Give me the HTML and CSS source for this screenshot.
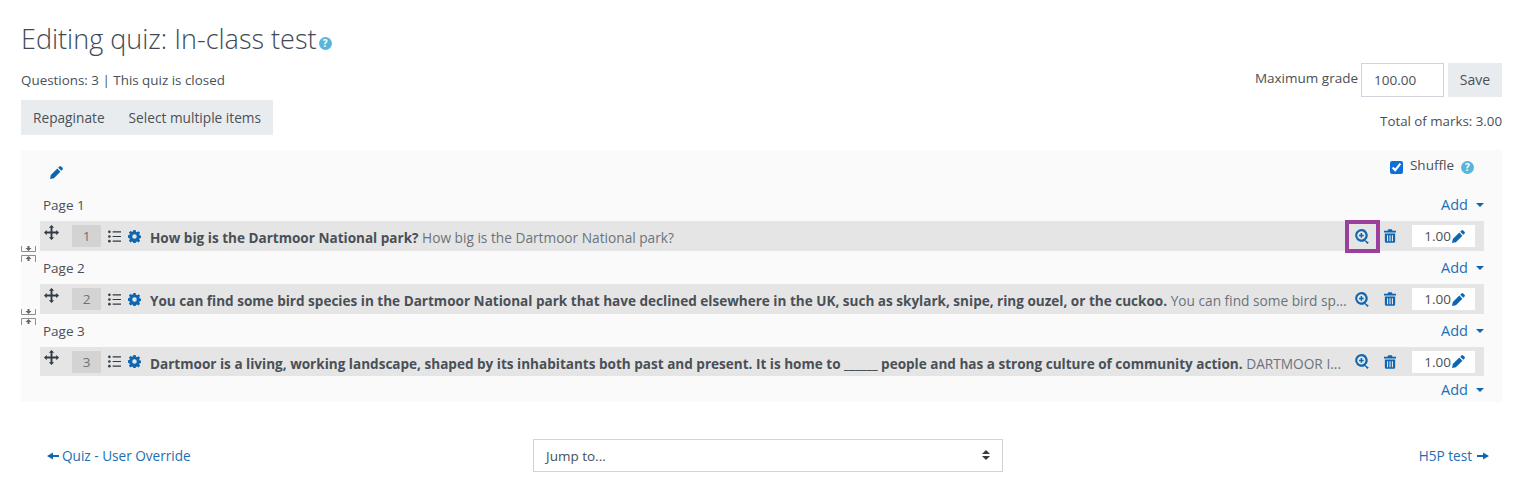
FILE: index.html
```html
<!DOCTYPE html>
<html lang="en">
<head>
    <meta charset="UTF-8">
    <meta name="viewport" content="width=device-width, initial-scale=1.0">
    <title>Editing quiz: In-class test</title>
    <link rel="stylesheet" href="styles.css">
</head>
<body>
    <svg class="sprites" width="0" height="0">
        <symbol id="i-move" viewBox="0 0 16 16"><path d="M8 0l2.800 2.900H9v4.100h4.100V5.200L16 8l-2.900 2.800V9H9v4.100h1.800L8 16l-2.800-2.900H7V9H2.900v1.800L0 8l2.900-2.800V7H7V2.900H5.200z"/></symbol>
        <symbol id="i-list" viewBox="0 0 14 14"><circle cx="1.500" cy="2" r="1.400"/><circle cx="1.500" cy="7" r="1.400"/><circle cx="1.500" cy="12" r="1.400"/><path d="M5 1.400h9v1.200H5zM5 6.400h9v1.200H5zM5 11.400h9v1.200H5z"/></symbol>
        <symbol id="i-cog" viewBox="0 0 16 16"><path fill-rule="evenodd" d="M6.600 0h2.800l.4 2.100 1.300.6 1.800-1.200 2 2-1.200 1.800.6 1.300 2.100.4v2.800l-2.100.4-.6 1.300 1.200 1.800-2 2-1.800-1.200-1.300.6-.4 2.100H6.600l-.4-2.100-1.300-.6-1.800 1.200-2-2 1.200-1.800-.6-1.300L-.4 9.400V6.600l2.100-.4.6-1.300L1.100 3.100l2-2 1.800 1.200 1.300-.6zM8 5.200a2.800 2.800 0 100 5.600 2.800 2.800 0 000-5.600z"/></symbol>
        <symbol id="i-zoom" viewBox="0 0 16 16"><path fill-rule="evenodd" d="M6.800 0a6.800 6.800 0 014.300 12l3.600 2.500-1.500 1.500-2.800-3.300A6.800 6.800 0 116.800 0zm0 2.400a4.400 4.400 0 100 8.800 4.400 4.400 0 000-8.800z"/><path d="M6 4.300h1.600V6H9.300v1.600H7.600v1.700H6V7.600H4.300V6H6z"/></symbol>
        <symbol id="i-trash" viewBox="0 0 14 16"><path fill-rule="evenodd" d="M5 0h4l1 2h4v2H0V2h4zM1 5h12v9.500a1.500 1.500 0 01-1.500 1.500h-9A1.500 1.500 0 011 14.500zm2.500 2v7h1.300V7zm2.900 0v7h1.300V7zm2.800 0v7h1.300V7z"/></symbol>
        <symbol id="i-pencil" viewBox="0 0 16 16"><path d="M11.600.6a1.500 1.500 0 012.100 0l1.700 1.700a1.500 1.500 0 010 2.100l-1.500 1.500-3.800-3.800zM9 3.200l3.800 3.800-8 8L0 16l1-4.800z"/></symbol>
        <symbol id="i-split" viewBox="0 0 15 16"><path fill="none" stroke="#8f8f8f" d="M.5 0v5.500h14V0M.5 16V9.500h14V16"/><path fill="#666" d="M7.500 5L4.500 2h2V0h2v2h2zM7.500 10L10.500 13h-2v2h-2v-2h-2z"/></symbol>
        <symbol id="i-prev" viewBox="0 0 12 8"><path d="M0 4l6-3.500V3h6v2H6v2.500z"/></symbol>
        <symbol id="i-next" viewBox="0 0 12 8"><path d="M12 4L6 .5V3H0v2h6v2.500z"/></symbol>
    </svg>

    <main class="page">
        <h1 class="page-title">Editing quiz: In-class test<span class="help help-title">?</span></h1>

        <div class="top-row">
            <div class="top-left">
                <p class="status">Questions: 3 | This quiz is closed</p>
                <div class="toolbar">
                    <a href="#">Repaginate</a>
                    <a href="#">Select multiple items</a>
                </div>
            </div>
            <div class="top-right">
                <form class="grade-form">
                    <label for="maxgrade">Maximum grade</label>
                    <input id="maxgrade" type="text" value="100.00">
                    <button type="button">Save</button>
                </form>
                <p class="total">Total of marks: 3.00</p>
            </div>
        </div>

        <section class="edit-area">
            <div class="area-head">
                <a href="#" class="area-pencil"><svg class="icon"><use href="#i-pencil"/></svg></a>
                <label class="shuffle">
                    <input type="checkbox" checked>
                    <span class="shuffle-label">Shuffle</span>
                    <span class="help help-small">?</span>
                </label>
            </div>

            <div class="page-group">
                <div class="page-head"><span>Page 1</span><a href="#" class="add">Add<i class="caret"></i></a></div>
                <div class="slot">
                    <svg class="move"><use href="#i-move"/></svg>
                    <span class="num">1</span>
                    <svg class="list"><use href="#i-list"/></svg>
                    <svg class="icon cog"><use href="#i-cog"/></svg>
                    <p class="q"><b>How big is the Dartmoor National park?</b> How big is the Dartmoor National park?</p>
                    <a href="#" class="act act-on"><svg class="icon zoom"><use href="#i-zoom"/></svg></a>
                    <a href="#" class="act"><svg class="icon trash"><use href="#i-trash"/></svg></a>
                    <span class="mark">1.00<svg class="icon"><use href="#i-pencil"/></svg></span>
                </div>
                <svg class="split"><use href="#i-split"/></svg>
            </div>

            <div class="page-group">
                <div class="page-head"><span>Page 2</span><a href="#" class="add">Add<i class="caret"></i></a></div>
                <div class="slot">
                    <svg class="move"><use href="#i-move"/></svg>
                    <span class="num">2</span>
                    <svg class="list"><use href="#i-list"/></svg>
                    <svg class="icon cog"><use href="#i-cog"/></svg>
                    <p class="q"><b>You can find some bird species in the Dartmoor National park that have declined elsewhere in the UK, such as skylark, snipe, ring ouzel, or the cuckoo.</b> You can find some bird sp...</p>
                    <a href="#" class="act"><svg class="icon zoom"><use href="#i-zoom"/></svg></a>
                    <a href="#" class="act"><svg class="icon trash"><use href="#i-trash"/></svg></a>
                    <span class="mark">1.00<svg class="icon"><use href="#i-pencil"/></svg></span>
                </div>
                <svg class="split"><use href="#i-split"/></svg>
            </div>

            <div class="page-group">
                <div class="page-head"><span>Page 3</span><a href="#" class="add">Add<i class="caret"></i></a></div>
                <div class="slot slot-last">
                    <svg class="move"><use href="#i-move"/></svg>
                    <span class="num">3</span>
                    <svg class="list"><use href="#i-list"/></svg>
                    <svg class="icon cog"><use href="#i-cog"/></svg>
                    <p class="q"><b>Dartmoor is a living, working landscape, shaped by its inhabitants both past and present. It is home to ______ people and has a strong culture of community action.</b> DARTMOOR I...</p>
                    <a href="#" class="act"><svg class="icon zoom"><use href="#i-zoom"/></svg></a>
                    <a href="#" class="act"><svg class="icon trash"><use href="#i-trash"/></svg></a>
                    <span class="mark">1.00<svg class="icon"><use href="#i-pencil"/></svg></span>
                </div>
            </div>

            <div class="last-add"><a href="#" class="add">Add<i class="caret"></i></a></div>
        </section>

        <nav class="activity-nav">
            <a href="#" class="nav-prev"><svg class="nav-arrow"><use href="#i-prev"/></svg>Quiz - User Override</a>
            <div class="jump"><span>Jump to...</span><i class="updown"></i></div>
            <a href="#" class="nav-next">H5P test<svg class="nav-arrow"><use href="#i-next"/></svg></a>
        </nav>
    </main>
</body>
</html>
```

FILE: styles.css
```css
/* Basic Styling */
body {
    margin: 0;
    font-family: "Open Sans", Arial, sans-serif;
    font-size: 13.5px;
    color: #495057;
    background-color: #fff;
}

a {
    color: #1a6fb5;
    text-decoration: none;
}

p {
    margin: 0;
}

.sprites {
    position: absolute;
}

.page {
    padding: 21px 34px 0 21px;
}

.page-title {
    margin: 0;
    font-size: 27px;
    font-weight: 300;
    line-height: 36px;
    color: #3f4a54;
}

.help {
    display: inline-block;
    border-radius: 50%;
    background-color: #5bb4d8;
    color: #fff;
    font-weight: 700;
    text-align: center;
}

.help-title {
    width: 13px;
    height: 13px;
    margin-left: 2px;
    font-size: 10px;
    line-height: 13px;
    vertical-align: 2px;
}

.help-small {
    width: 13px;
    height: 13px;
    font-size: 10px;
    line-height: 13px;
}

/* Top controls */
.top-row {
    display: flex;
    justify-content: space-between;
    margin-top: 6px;
}

.status {
    line-height: 20px;
    margin-top: 7px;
    font-size: 13.4px;
}

.toolbar {
    display: flex;
    gap: 24px;
    width: max-content;
    margin-top: 10px;
    padding: 0 12px;
    background-color: #e9ecef;
    font-size: 13.7px;
    line-height: 35px;
}

.toolbar a {
    color: #495057;
}

.top-right {
    text-align: right;
}

.grade-form {
    display: flex;
    align-items: center;
    justify-content: flex-end;
    gap: 4px;
}

.grade-form label {
    margin-top: -4px;
    margin-right: -1px;
}

.grade-form input {
    box-sizing: border-box;
    width: 83px;
    height: 34px;
    padding: 0 12px;
    border: 1px solid #ced4da;
    font: inherit;
    color: #495057;
}

.grade-form button {
    height: 34px;
    width: 54px;
    margin-left: 0;
    padding: 0 0 2px;
    border: none;
    background-color: #e9ecef;
    font: inherit;
    font-size: 14px;
    color: #495057;
}

.total {
    margin-top: 14px;
    line-height: 20px;
    font-size: 13.3px;
}

/* Question list */
.edit-area {
    margin-top: 15px;
    padding: 0 18px 0 19px;
    background-color: #fafafa;
}

.area-head {
    display: flex;
    justify-content: space-between;
    height: 46px;
}

.area-pencil {
    margin: 15px 0 0 10px;
}

.icon {
    width: 14px;
    height: 14px;
    fill: #0f66b0;
}

.area-pencil .icon {
    width: 13px;
    height: 13px;
}

.shuffle {
    display: flex;
    align-items: center;
    height: 34px;
    margin-right: 10px;
}

.shuffle input {
    width: 13px;
    height: 13px;
    margin: 0 7px 0 0;
    accent-color: #0f6fd8;
}

.shuffle-label {
    margin: -4px 7px 0 0;
}

.page-group {
    position: relative;
}

.page-head {
    display: flex;
    justify-content: space-between;
    align-items: center;
    box-sizing: border-box;
    height: 25px;
    padding: 0 0 8px 3px;
}

.add {
    display: inline-flex;
    align-items: center;
    font-size: 14.5px;
}

.caret {
    width: 0;
    height: 0;
    margin-left: 8px;
    border-top: 4px solid #0f66b0;
    border-left: 4.5px solid transparent;
    border-right: 4.5px solid transparent;
}

.slot {
    display: flex;
    align-items: center;
    height: 30px;
    margin-bottom: 8px;
    padding: 0 9px 0 4px;
    background-color: #e5e5e5;
}

.slot-last {
    height: 29px;
}

.move {
    width: 15px;
    height: 15px;
    margin: -8px 0 0 0;
    fill: #2f3b45;
}

.num {
    width: 29px;
    height: 22px;
    margin-left: 13px;
    background-color: #d3d3d3;
    text-align: center;
    line-height: 22px;
    color: #6a737b;
}

.list {
    width: 13px;
    height: 13px;
    margin-left: 7px;
    fill: #2f3b45;
}

.cog {
    width: 13px;
    height: 13px;
    margin-left: 7px;
}

.q {
    flex: 1;
    min-width: 0;
    margin: 3px 0 0 9px;
    white-space: nowrap;
    font-size: 13.7px;
    color: #6a737b;
}

.q b {
    font-size: 13.55px;
    color: #495057;
}

.act {
    display: flex;
    align-items: center;
    justify-content: center;
    width: 27px;
    height: 25px;
    margin-left: 4px;
}

.act-on {
    outline: 4px solid #9b3f9f;
}

.zoom {
    width: 15px;
    height: 15px;
}

.trash {
    width: 12px;
}

.act + .act {
    margin-left: 0;
}

.mark {
    display: flex;
    align-items: center;
    justify-content: flex-end;
    gap: 1px;
    box-sizing: border-box;
    width: 63px;
    height: 22px;
    margin-left: 9px;
    padding-right: 10px;
    background-color: #fff;
}

.mark .icon {
    width: 13px;
    height: 13px;
}

.split {
    position: absolute;
    left: -19px;
    top: 50px;
    width: 15px;
    height: 16px;
}

.last-add {
    display: flex;
    justify-content: flex-end;
    align-items: flex-start;
    height: 18px;
    line-height: 11px;
}

/* Footer nav */
.activity-nav {
    display: grid;
    grid-template-columns: 1fr 470px 1fr;
    align-items: center;
    margin-top: 37px;
    padding: 0 13px 0 26px;
}

.nav-prev,
.nav-next {
    display: flex;
    align-items: center;
    gap: 3px;
    font-size: 13.6px;
}

.nav-next {
    justify-content: flex-end;
    gap: 5px;
}

.nav-arrow {
    width: 12px;
    height: 8px;
    fill: #0f66b0;
}

.jump {
    display: flex;
    justify-content: space-between;
    align-items: center;
    box-sizing: border-box;
    height: 33px;
    padding: 0 12px;
    border: 1px solid #ced4da;
    background-color: #fff;
}

.updown {
    width: 0;
    height: 0;
    border-left: 4px solid transparent;
    border-right: 4px solid transparent;
    border-top: 4px solid #343a40;
    position: relative;
    margin-top: 5px;
}

.updown::before {
    content: "";
    position: absolute;
    left: -4px;
    top: -10px;
    border-left: 4px solid transparent;
    border-right: 4px solid transparent;
    border-bottom: 4px solid #343a40;
}
```
